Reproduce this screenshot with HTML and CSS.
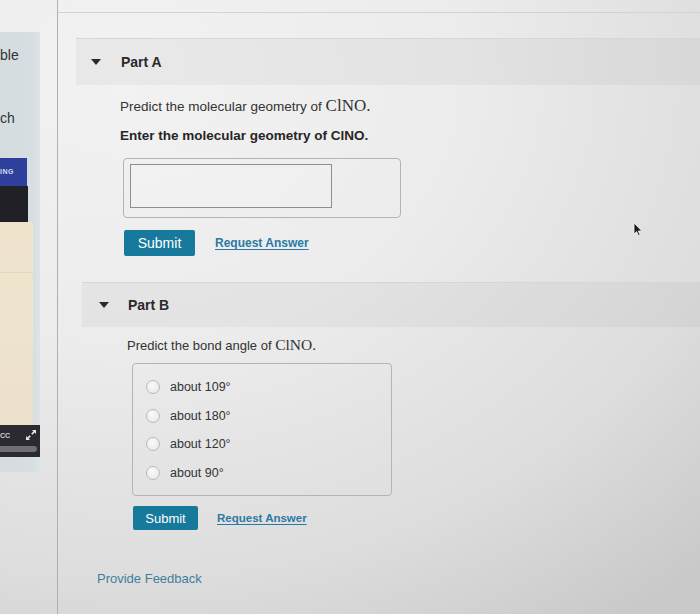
FILE: index.html
```html
<!DOCTYPE html>
<html lang="en">
<head>
<meta charset="utf-8">
<title>Part A / Part B</title>
<link rel="stylesheet" href="styles.css">
</head>
<body>
<div class="page">
  <aside class="sidebar">
    <div class="side-panel">
      <div class="side-text side-text-1">ble</div>
      <div class="side-text side-text-2">ch</div>
      <div class="side-blue">ING</div>
      <div class="side-black"></div>
      <div class="side-video"><div class="side-video-line"></div></div>
      <div class="side-controls">
        <div class="side-controls-row">
          <span class="side-cc">CC</span>
          <svg class="side-expand" width="12" height="12" viewBox="0 0 12 12">
            <path d="M7 1h4v4L9.6 3.6 7.4 5.8 6.2 4.6 8.4 2.4z M5 11H1V7l1.4 1.4 2.2-2.2 1.2 1.2-2.2 2.2z" fill="#e8e8e8"/>
          </svg>
        </div>
        <div class="side-progress"></div>
      </div>
    </div>
  </aside>

  <main class="main">
    <div class="topline"></div>

    <section class="part part-a">
      <header class="part-head">
        <span class="caret"></span>
        <h2 class="part-title">Part A</h2>
      </header>
      <div class="part-body">
        <p class="question">Predict the molecular geometry of <span class="chem">ClNO</span><span class="chem">.</span></p>
        <p class="question strong">Enter the molecular geometry of ClNO.</p>
        <div class="answer-box">
          <div class="answer-input"></div>
        </div>
        <div class="actions">
          <button class="submit" type="button">Submit</button>
          <a class="request" href="#">Request Answer</a>
        </div>
      </div>
    </section>

    <section class="part part-b">
      <header class="part-head">
        <span class="caret"></span>
        <h2 class="part-title">Part B</h2>
      </header>
      <div class="part-body">
        <p class="question">Predict the bond angle of <span class="chem">ClNO</span><span class="chem">.</span></p>
        <div class="options">
          <label class="option"><span class="radio"></span><span class="opt-text">about 109°</span></label>
          <label class="option"><span class="radio"></span><span class="opt-text">about 180°</span></label>
          <label class="option"><span class="radio"></span><span class="opt-text">about 120°</span></label>
          <label class="option"><span class="radio"></span><span class="opt-text">about 90°</span></label>
        </div>
        <div class="actions">
          <button class="submit" type="button">Submit</button>
          <a class="request" href="#">Request Answer</a>
        </div>
      </div>
    </section>

    <a class="feedback" href="#">Provide Feedback</a>
  </main>

  <svg class="cursor" width="10" height="15" viewBox="0 0 10 15">
    <path d="M1 1 L1 12 L3.6 9.6 L5.4 13.6 L7 12.9 L5.3 9 L8.8 9 Z" fill="#1a1a22" stroke="#f4f4f4" stroke-width="0.8"/>
  </svg>
</div>
</body>
</html>
```

FILE: styles.css
```css
html, body {
  margin: 0;
  padding: 0;
}

body {
  width: 700px;
  height: 614px;
  overflow: hidden;
  font-family: "Liberation Sans", Arial, sans-serif;
  color: #333;
}

.page {
  position: relative;
  display: flex;
  width: 700px;
  height: 614px;
  background: radial-gradient(ellipse 120% 110% at 18% 12%, #f2f2f2 0%, #ececec 40%, #dddddd 75%, #c9c9c9 100%);
}

/* ---------- sidebar ---------- */
.sidebar {
  flex: none;
  width: 58px;
  box-sizing: border-box;
  border-right: 1px solid #a8b0ba;
  padding-top: 32px;
}

.side-panel {
  width: 40px;
  height: 440px;
  background: linear-gradient(90deg, #d4dce0 0%, #d6dee2 80%, #dde3e6 100%);
  display: flex;
  flex-direction: column;
}

.side-text {
  font-size: 14px;
  line-height: 16px;
  color: #333;
}

.side-text-1 {
  margin-top: 15px;
}

.side-text-2 {
  margin-top: 47px;
}

.side-blue {
  margin-top: 32px;
  width: 27px;
  height: 28px;
  box-sizing: border-box;
  background: #2e3f9c;
  color: #d8ddf2;
  font-size: 7px;
  font-weight: bold;
  letter-spacing: 0.5px;
  line-height: 28px;
  overflow: hidden;
}

.side-black {
  width: 28px;
  height: 36px;
  background: #202026;
}

.side-video {
  width: 33px;
  height: 203px;
  background: linear-gradient(180deg, #efe3cc 0%, #efe4cf 40%, #ece0ca 100%);
  padding-top: 50px;
  box-sizing: border-box;
}

.side-video-line {
  height: 1px;
  background: #e6d7b8;
}

.side-controls {
  width: 40px;
  height: 32px;
  background: #2a2a30;
  box-sizing: border-box;
  padding: 3px 3px 0 0;
  display: flex;
  flex-direction: column;
  gap: 4px;
}

.side-controls-row {
  display: flex;
  align-items: center;
  justify-content: space-between;
  height: 14px;
}

.side-cc {
  font-size: 7px;
  color: #cfcfcf;
  font-weight: bold;
}

.side-expand {
  display: block;
}

.side-progress {
  height: 6px;
  border-radius: 0 3px 3px 0;
  background: #6f6f74;
}

/* ---------- main ---------- */
.main {
  flex: 1;
  min-width: 0;
}

.topline {
  height: 12px;
  border-bottom: 1px solid #d2d2d2;
}

.part-head {
  box-sizing: border-box;
  display: flex;
  align-items: center;
  height: 47px;
  background: rgba(0, 0, 0, 0.035);
  border-top: 1px solid #d6d6d6;
}

.caret {
  flex: none;
  width: 0;
  height: 0;
  border-left: 5px solid transparent;
  border-right: 5px solid transparent;
  border-top: 6px solid #2a2a2a;
}

.part-title {
  margin: 0;
  font-size: 14px;
  font-weight: bold;
  color: #2a2a2a;
}

.question {
  margin: 0;
  font-size: 13.5px;
  line-height: 20px;
  color: #333;
}

.question.strong {
  font-weight: bold;
  color: #262626;
}

.chem {
  font-family: "Liberation Serif", "Times New Roman", serif;
  font-size: 17px;
}

.answer-box {
  box-sizing: border-box;
  border: 1px solid #b4b4b4;
  border-radius: 4px;
  padding: 5px 6px;
}

.answer-input {
  box-sizing: border-box;
  width: 202px;
  height: 44px;
  border: 1px solid #8e8e8e;
  background: rgba(255, 255, 255, 0.15);
}

.actions {
  display: flex;
  align-items: center;
}

.submit {
  border: none;
  border-radius: 2px;
  background: #17799b;
  color: #fff;
  font-family: "Liberation Sans", Arial, sans-serif;
  padding: 0;
  cursor: pointer;
}

.request {
  font-weight: bold;
  color: #2b7aa3;
  text-decoration: underline;
  text-underline-offset: 2px;
}

/* Part A */
.part-a {
  margin-top: 25px;
}

.part-a .part-head {
  margin-left: 18px;
  padding-left: 15px;
  gap: 20px;
}

.part-a .part-body {
  padding-left: 62px;
  padding-top: 11px;
}

.part-a .question.strong {
  margin-top: 9px;
}

.part-a .answer-box {
  margin-top: 12px;
  margin-left: 3px;
  width: 278px;
  height: 60px;
}

.part-a .actions {
  margin-top: 12px;
  margin-left: 4px;
  gap: 20px;
}

.part-a .submit {
  width: 71px;
  height: 26px;
  font-size: 14px;
}

.part-a .request {
  font-size: 12px;
}

/* Part B */
.part-b {
  margin-top: 26px;
}

.part-b .part-head {
  margin-left: 24px;
  padding-left: 17px;
  gap: 19px;
  height: 45px;
}

.part-b .part-body {
  padding-left: 69px;
  padding-top: 8px;
}

.part-b .question {
  font-size: 13px;
}

.part-b .chem {
  font-size: 15.5px;
}

.options {
  box-sizing: border-box;
  margin-top: 7px;
  margin-left: 5px;
  width: 260px;
  height: 133px;
  border: 1px solid #b4b4b4;
  border-radius: 4px;
  padding: 9px 0 0 13px;
  display: flex;
  flex-direction: column;
}

.option {
  display: flex;
  align-items: center;
  gap: 10px;
  height: 28.5px;
}

.radio {
  flex: none;
  box-sizing: border-box;
  width: 14px;
  height: 14px;
  border-radius: 50%;
  border: 1px solid #b9b9b9;
  background: radial-gradient(circle at 40% 35%, #fafafa 0%, #ececec 70%, #dcdcdc 100%);
}

.opt-text {
  font-size: 12.5px;
  color: #333;
}

.part-b .actions {
  margin-top: 10px;
  margin-left: 6px;
  gap: 19px;
}

.part-b .submit {
  width: 65px;
  height: 24px;
  font-size: 13px;
}

.part-b .request {
  font-size: 11.5px;
}

.feedback {
  display: block;
  margin-top: 39px;
  margin-left: 39px;
  width: max-content;
  font-size: 13px;
  line-height: 20px;
  color: #3d7f9c;
  text-decoration: none;
}

/* mouse pointer over the page */
.cursor {
  position: absolute;
  left: 633px;
  top: 222px;
}
```
